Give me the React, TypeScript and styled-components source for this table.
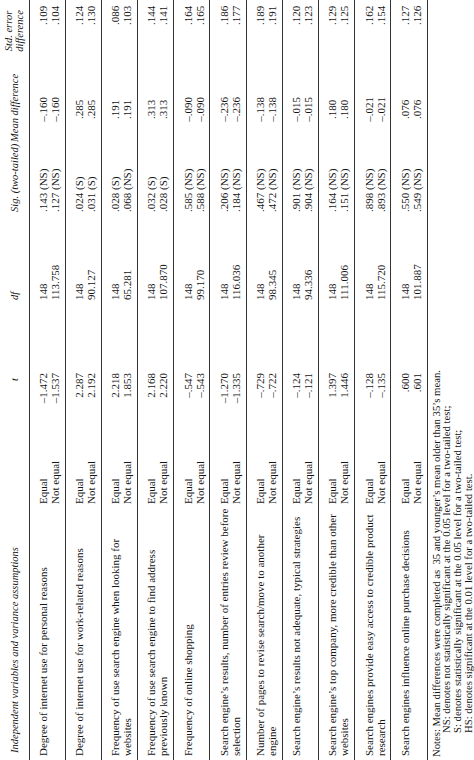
import React from "react";
import styled, { createGlobalStyle } from "styled-components";

const Global = createGlobalStyle`
  html, body { margin: 0; padding: 0; background: #fff; }
  body { width: 474px; height: 760px; overflow: hidden; }
`;

const Viewport = styled.div`
  width: 474px;
  height: 760px;
  overflow: hidden;
  background: #fff;
`;

const Sheet = styled.div`
  width: 760px;
  height: 474px;
  overflow: hidden;
  transform-origin: 0 0;
  transform: translateY(760px) rotate(-90deg);
  font-family: "Liberation Serif", "Times New Roman", serif;
  color: #141414;
  background: #fff;
`;

const Table = styled.table`
  border-collapse: collapse;
  table-layout: fixed;
  width: 800px;
  font-size: 11px;
  line-height: 12px;
`;

type Align = "left" | "right" | "center";

const Head = styled.th<{ $align?: Align; $pl?: number; $pr?: number }>`
  height: 28.5px;
  padding: 0 ${(p) => p.$pr ?? 0}px 0 ${(p) => p.$pl ?? 0}px;
  font-size: 10.5px;
  font-style: italic;
  font-weight: normal;
  text-align: ${(p) => p.$align ?? "left"};
  vertical-align: middle;
  white-space: nowrap;
  border-bottom: 1.5px solid #333;
  line-height: 11px;
`;

const Cell = styled.td<{
  $align?: Align;
  $pl?: number;
  $pr?: number;
  $first?: boolean;
  $last?: boolean;
}>`
  padding-top: ${(p) => (p.$first ? 7.4 : 0)}px;
  padding-bottom: ${(p) => (p.$last ? 3.8 : 0)}px;
  padding-left: ${(p) => p.$pl ?? 0}px;
  padding-right: ${(p) => p.$pr ?? 0}px;
  text-align: ${(p) => p.$align ?? "left"};
  vertical-align: top;
  white-space: nowrap;
  border-bottom: ${(p) => (p.$last ? "1.5px solid #333" : "none")};
`;

const LabelCell = styled.td`
  padding: 7.4px 0 3.8px 4px;
  vertical-align: top;
  white-space: nowrap;
  border-bottom: 1.5px solid #333;
`;

const Notes = styled.div`
  padding: 3px 0 0 3px;
  font-size: 10.7px;
  line-height: 10.7px;
  white-space: nowrap;
`;

const NoteLine = styled.div<{ $indent?: boolean }>`
  padding-left: ${(p) => (p.$indent ? 24 : 0)}px;
`;

type Group = { label: string[]; rows: string[][] };

const groups: Group[] = [
  {
    label: ["Degree of internet use for personal reasons"],
    rows: [
      ["Equal", "\u20131.472", "148", ".143 (NS)", "\u2013.160", ".109"],
      ["Not equal", "\u20131.537", "113.758", ".127 (NS)", "\u2013.160", ".104"],
    ],
  },
  {
    label: ["Degree of internet use for work-related reasons"],
    rows: [
      ["Equal", "2.287", "148", ".024 (S)", ".285", ".124"],
      ["Not equal", "2.192", "90.127", ".031 (S)", ".285", ".130"],
    ],
  },
  {
    label: ["Frequency of use search engine when looking for", "websites"],
    rows: [
      ["Equal", "2.218", "148", ".028 (S)", ".191", ".086"],
      ["Not equal", "1.853", "65.281", ".068 (NS)", ".191", ".103"],
    ],
  },
  {
    label: ["Frequency of use search engine to find address", "previously known"],
    rows: [
      ["Equal", "2.168", "148", ".032 (S)", ".313", ".144"],
      ["Not equal", "2.220", "107.870", ".028 (S)", ".313", ".141"],
    ],
  },
  {
    label: ["Frequency of online shopping"],
    rows: [
      ["Equal", "\u2013.547", "148", ".585 (NS)", "\u2013.090", ".164"],
      ["Not equal", "\u2013.543", "99.170", ".588 (NS)", "\u2013.090", ".165"],
    ],
  },
  {
    label: ["Search engine\u2019s results, number of entries review before", "selection"],
    rows: [
      ["Equal", "\u20131.270", "148", ".206 (NS)", "\u2013.236", ".186"],
      ["Not equal", "\u20131.335", "116.036", ".184 (NS)", "\u2013.236", ".177"],
    ],
  },
  {
    label: ["Number of pages to revise search/move to another", "engine"],
    rows: [
      ["Equal", "\u2013.729", "148", ".467 (NS)", "\u2013.138", ".189"],
      ["Not equal", "\u2013.722", "98.345", ".472 (NS)", "\u2013.138", ".191"],
    ],
  },
  {
    label: ["Search engine\u2019s results not adequate, typical strategies"],
    rows: [
      ["Equal", "\u2013.124", "148", ".901 (NS)", "\u2013.015", ".120"],
      ["Not equal", "\u2013.121", "94.336", ".904 (NS)", "\u2013.015", ".123"],
    ],
  },
  {
    label: ["Search engine\u2019s top company, more credible than other", "websites"],
    rows: [
      ["Equal", "1.397", "148", ".164 (NS)", ".180", ".129"],
      ["Not equal", "1.446", "111.006", ".151 (NS)", ".180", ".125"],
    ],
  },
  {
    label: ["Search engines provide easy access to credible product", "research"],
    rows: [
      ["Equal", "\u2013.128", "148", ".898 (NS)", "\u2013.021", ".162"],
      ["Not equal", "\u2013.135", "115.720", ".893 (NS)", "\u2013.021", ".154"],
    ],
  },
  {
    label: ["Search engines influence online purchase decisions"],
    rows: [
      ["Equal", ".600", "148", ".550 (NS)", ".076", ".127"],
      ["Not equal", ".601", "101.887", ".549 (NS)", ".076", ".126"],
    ],
  },
];

const colWidths = [253, 72, 70, 153, 70, 65, 117];

const cellSpec: { align: Align; pl?: number; pr?: number }[] = [
  { align: "left", pl: 3 },
  { align: "right", pr: 8 },
  { align: "left", pl: 65 },
  { align: "left", pl: 0 },
  { align: "center" },
  { align: "left", pl: 52 },
];

export default function App() {
  return (
    <Viewport>
      <Global />
      <Sheet>
        <Table>
          <colgroup>
            {colWidths.map((w, i) => (
              <col key={i} style={{ width: w }} />
            ))}
          </colgroup>
          <thead>
            <tr>
              <Head colSpan={2} $pl={7}>
                Independent variables and variance assumptions
              </Head>
              <Head $align="right" $pr={13}>
                t
              </Head>
              <Head $pl={65}>df</Head>
              <Head>Sig. (two-tailed)</Head>
              <Head $align="center">Mean difference</Head>
              <Head $align="center" $pr={25}>
                Std. error
                <br />
                difference
              </Head>
            </tr>
          </thead>
          {groups.map((g, gi) => (
            <tbody key={gi}>
              {g.rows.map((r, ri) => (
                <tr key={ri}>
                  {ri === 0 && (
                    <LabelCell rowSpan={2}>
                      {g.label.map((l, li) => (
                        <React.Fragment key={li}>
                          {li > 0 && <br />}
                          {l}
                        </React.Fragment>
                      ))}
                    </LabelCell>
                  )}
                  {r.map((v, ci) => (
                    <Cell
                      key={ci}
                      $align={cellSpec[ci].align}
                      $pl={cellSpec[ci].pl}
                      $pr={cellSpec[ci].pr}
                      $first={ri === 0}
                      $last={ri === 1}
                    >
                      {v}
                    </Cell>
                  ))}
                </tr>
              ))}
            </tbody>
          ))}
        </Table>
        <Notes>
          <NoteLine>
            Notes: Mean differences were completed as&nbsp; 35 and younger’s mean older than 35’s mean.
          </NoteLine>
          <NoteLine $indent>
            NS: denotes not statistically significant at the 0.05 level for a two-tailed test;
          </NoteLine>
          <NoteLine $indent>
            S: denotes statistically significant at the 0.05 level for a two-tailed test;
          </NoteLine>
          <NoteLine $indent>HS: denotes significant at the 0.01 level for a two-tailed test.</NoteLine>
        </Notes>
      </Sheet>
    </Viewport>
  );
}
